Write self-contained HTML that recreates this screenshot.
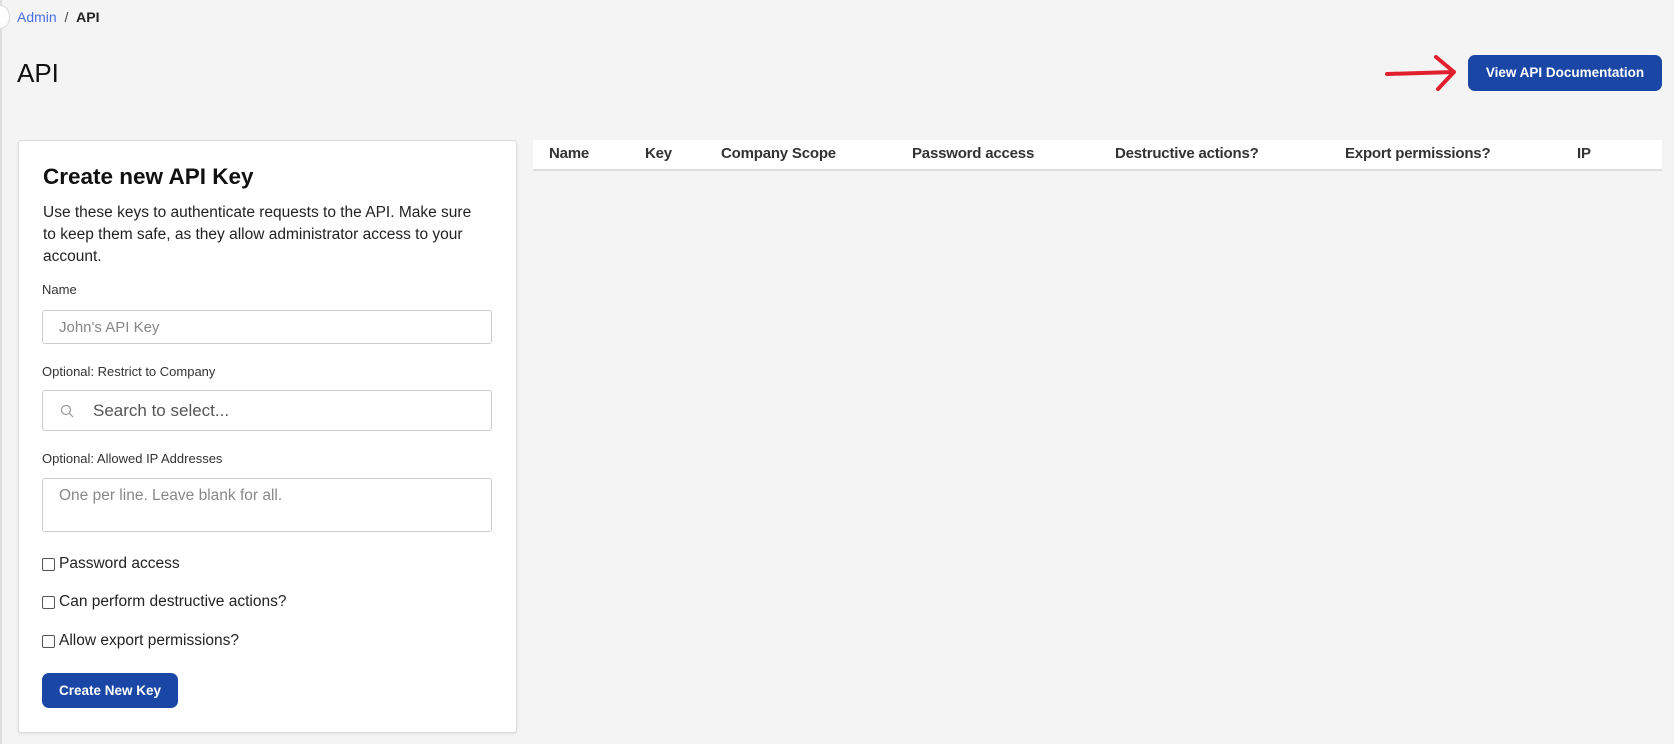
<!DOCTYPE html>
<html><head><style>
*{box-sizing:border-box;margin:0;padding:0}
body{width:1674px;height:744px;background:#f4f4f4;font-family:"Liberation Sans",Arial,sans-serif;color:#222;position:relative;overflow:hidden}
.abs{position:absolute}
.lbl{position:absolute;left:42px;font-size:13px;color:#333}
.inp{position:absolute;left:42px;width:450px;background:#fff;border:1px solid #ccc;border-radius:3px;font-size:15px;color:#888}
.cb{position:absolute;left:42px;font-size:15.5px;color:#222;display:flex;align-items:center;height:20px}
.cb i{display:block;width:13px;height:13px;border:1px solid #555;border-radius:2px;margin-right:4px;background:#fff}
.th{position:absolute;top:145px;font-size:15px;font-weight:bold;color:#333;letter-spacing:-0.2px}
</style></head><body>
<div class="abs" style="left:0;top:0;width:2px;height:744px;background:#ddd"></div>
<div class="abs" style="left:-10px;top:5px;width:20px;height:24px;border-radius:50%;background:#fff;border:1px solid #ddd"></div>
<div class="abs" style="left:17px;top:9px;font-size:14px"><span style="color:#4a6fe0">Admin</span><span style="color:#444">&nbsp; / &nbsp;</span><b style="color:#222">API</b></div>
<div class="abs" style="left:17px;top:58px;font-size:26px;color:#111">API</div>
<svg class="abs" style="left:1384px;top:52px" width="76" height="42"><path d="M3 22 L70 20 M52 5 L70 20 L54 37" stroke="#e0202e" stroke-width="4" fill="none" stroke-linecap="round" stroke-linejoin="round"/></svg>
<div class="abs" style="left:1468px;top:55px;width:194px;height:36px;background:#1a46a6;border-radius:7px;color:#fff;font-size:13.5px;font-weight:bold;text-align:center;line-height:36px">View API Documentation</div>
<div class="abs" style="left:18px;top:140px;width:499px;height:593px;background:#fff;border:1px solid #ddd;border-radius:3px;box-shadow:0 1px 2px rgba(0,0,0,.08)">
<div class="abs" style="left:24px;top:23px;font-size:22.5px;font-weight:bold;color:#111">Create new API Key</div>
<div class="abs" style="left:24px;top:61px;width:440px;font-size:15.5px;line-height:22px;color:#222">Use these keys to authenticate requests to the API. Make sure to keep them safe, as they allow administrator access to your account.</div>
</div>
<div class="lbl" style="top:282px">Name</div>
<div class="inp" style="top:310px;height:34px;padding:8px 16px">John's API Key</div>
<div class="lbl" style="top:364px">Optional: Restrict to Company</div>
<div class="inp" style="top:390px;height:41px;padding:10px 0 0 50px;font-size:17px;color:#555">Search to select...</div>
<svg class="abs" style="left:60px;top:404px" width="14" height="14"><circle cx="6" cy="6" r="4.5" stroke="#999" stroke-width="1.2" fill="none"/><path d="M9.5 9.5 L13 13" stroke="#999" stroke-width="1.2"/></svg>
<div class="lbl" style="top:451px">Optional: Allowed IP Addresses</div>
<div class="inp" style="top:478px;height:54px;padding:8px 16px;font-size:15.5px">One per line. Leave blank for all.</div>
<div class="cb" style="top:554px"><i></i>Password access</div>
<div class="cb" style="top:592px"><i></i>Can perform destructive actions?</div>
<div class="cb" style="top:631px"><i></i>Allow export permissions?</div>
<div class="abs" style="left:42px;top:673px;width:136px;height:35px;background:#1a46a6;border-radius:7px;color:#fff;font-size:13.5px;font-weight:bold;text-align:center;line-height:35px">Create New Key</div>
<div class="abs" style="left:533px;top:140px;width:1129px;height:31px;background:#fff;border-bottom:2px solid #ddd"></div>
<div class="th" style="left:549px">Name</div>
<div class="th" style="left:645px">Key</div>
<div class="th" style="left:721px">Company Scope</div>
<div class="th" style="left:912px">Password access</div>
<div class="th" style="left:1115px">Destructive actions?</div>
<div class="th" style="left:1345px">Export permissions?</div>
<div class="th" style="left:1577px">IP</div>
</body></html>
